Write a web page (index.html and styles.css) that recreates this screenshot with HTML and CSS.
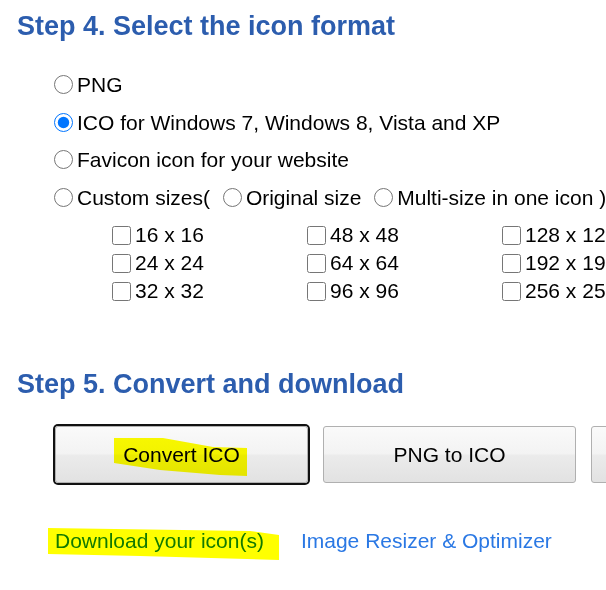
FILE: index.html
```html
<!DOCTYPE html>
<html>
<head>
<meta charset="utf-8">
<link rel="stylesheet" href="styles.css">
</head>
<body>
<div class="page">
  <h2 class="step">Step 4. Select the icon format</h2>
  <div class="formats">
    <label class="opt"><input type="radio" name="fmt">PNG</label>
    <label class="opt"><input type="radio" name="fmt" checked>ICO for Windows 7, Windows 8, Vista and XP</label>
    <label class="opt"><input type="radio" name="fmt">Favicon icon for your website</label>
    <div class="opt"><label><input type="radio" name="fmt">Custom sizes(</label> <label><input type="radio" name="sz">Original size</label> <label><input type="radio" name="sz">Multi-size in one icon )</label></div>
  </div>
  <div class="sizes">
    <label class="cell"><input type="checkbox">16 x 16</label>
    <label class="cell"><input type="checkbox">48 x 48</label>
    <label class="cell"><input type="checkbox">128 x 128</label>
    <label class="cell"><input type="checkbox">24 x 24</label>
    <label class="cell"><input type="checkbox">64 x 64</label>
    <label class="cell"><input type="checkbox">192 x 192</label>
    <label class="cell"><input type="checkbox">32 x 32</label>
    <label class="cell"><input type="checkbox">96 x 96</label>
    <label class="cell"><input type="checkbox">256 x 256</label>
  </div>
  <h2 class="step step5">Step 5. Convert and download</h2>
  <div class="buttons">
    <button class="btn focused">Convert ICO<span class="mark mark-btn"></span></button>
    <button class="btn">PNG to ICO</button>
    <button class="btn">ICO to PNG</button>
  </div>
  <div class="links">
    <a class="dl" href="#">Download your icon(s)<span class="mark mark-dl"></span></a>
    <a class="resize" href="#">Image Resizer &amp; Optimizer</a>
  </div>
</div>
</body>
</html>
```
FILE: styles.css
```css
html, body {
  margin: 0;
  padding: 0;
  background: #ffffff;
  overflow: hidden;
}
body {
  width: 606px;
  height: 590px;
  font-family: "Liberation Sans", Arial, sans-serif;
  color: #000;
}
.page {
  padding-top: 11px;
}
.step {
  margin: 0;
  padding-left: 17px;
  font-size: 27px;
  line-height: 31px;
  font-weight: bold;
  color: #2c5dae;
  white-space: nowrap;
}
.formats {
  margin-top: 24px;
  padding-left: 47px;
  font-size: 21px;
}
.opt {
  display: block;
  line-height: 37.5px;
  height: 37.5px;
  white-space: nowrap;
}
.opt input {
  width: 19px;
  height: 19px;
  margin: 4px 4px 0 7px;
  vertical-align: -2px;
}
.sizes {
  margin-top: 5px;
  padding-left: 106px;
  display: grid;
  grid-template-columns: 195px 195px 195px;
  grid-auto-rows: 28px;
  font-size: 21px;
  white-space: nowrap;
}
.cell {
  display: flex;
  align-items: center;
}
.cell input {
  width: 19px;
  height: 19px;
  margin: 1px 4px 0 6px;
}
.step5 {
  margin-top: 64px;
}
.buttons {
  margin-top: 26px;
  padding-left: 55px;
  display: flex;
  gap: 15px;
}
.btn {
  position: relative;
  flex: none;
  width: 253px;
  height: 57px;
  padding: 0;
  border: 1px solid #b0b0b0;
  border-radius: 3px;
  background: linear-gradient(#fafafa 0%, #f3f3f3 48%, #ebebeb 52%, #e2e2e2 100%);
  font-family: "Liberation Sans", Arial, sans-serif;
  font-size: 21px;
  color: #000;
}
.btn.focused {
  box-shadow: 0 0 0 2px #111;
}
.mark {
  position: absolute;
  background: #ffff00;
  mix-blend-mode: multiply;
  pointer-events: none;
}
.mark-btn {
  left: 58px;
  top: 10px;
  width: 133px;
  height: 39px;
  clip-path: polygon(0 1px, 49px 1px, 99px 10px, 133px 11px, 133px 39px, 106px 38px, 46px 33px, 0 26px);
}
.links {
  margin-top: 46px;
  padding-left: 55px;
  display: flex;
  gap: 37px;
  font-size: 21px;
  line-height: 24px;
  white-space: nowrap;
}
.links a {
  text-decoration: none;
}
.dl {
  position: relative;
  color: #127a12;
}
.resize {
  color: #2a78e4;
}
.mark-dl {
  left: -7px;
  top: -2px;
  width: 231px;
  height: 34px;
  clip-path: polygon(0 1px, 202px 4px, 231px 8px, 231px 33px, 92px 29px, 0 27px);
}
```
